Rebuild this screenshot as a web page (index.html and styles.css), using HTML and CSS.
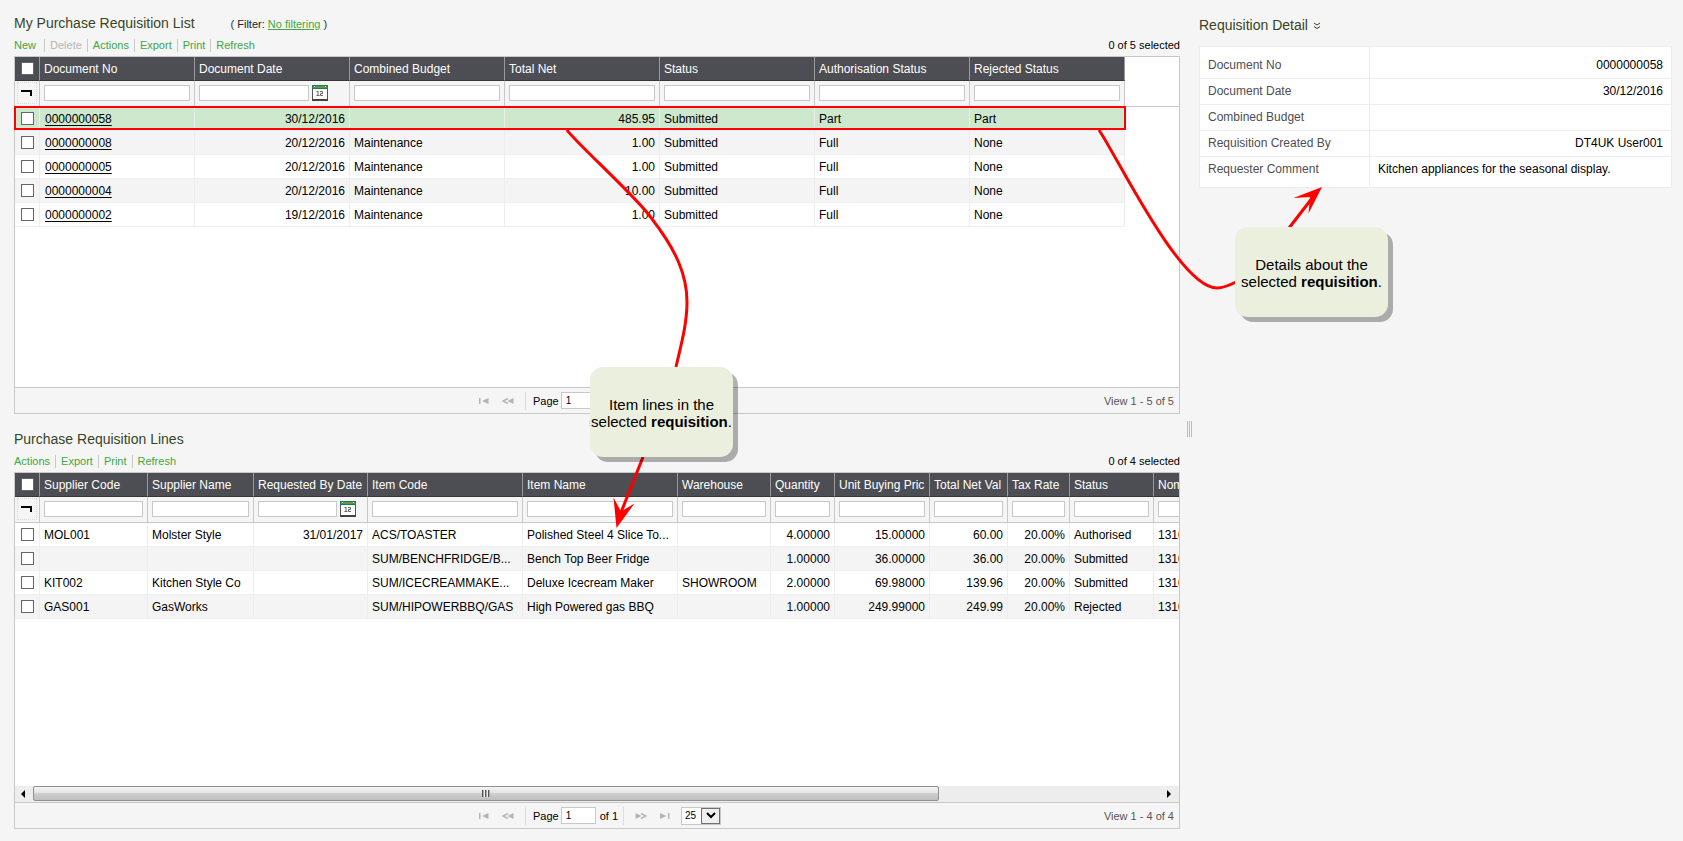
FILE: index.html
```html
<!DOCTYPE html>
<html lang="en">
<head>
<meta charset="utf-8">
<title>My Purchase Requisition List</title>
<link rel="stylesheet" href="styles.css">
</head>
<body>
<svg class="defs" aria-hidden="true">
  <defs>
    <symbol id="i-cal" viewBox="0 0 16 16"><path fill="#fff" stroke="#555" d="M.5 3.500v11.500h15V3.500z"/><path fill="#444" d="M0 14h16v2H0z"/><path fill="#13805f" d="M0 0h16v4H0z"/><path fill="#6f9440" d="M1 1h14v2H1z"/><path fill="#fff" d="M2 1h1v1H2zM13 1h1v1h-1z"/><path fill="none" stroke="#666" d="M4.500 6.500h1.500M6 6v5M4.500 10.500h3M8 6.500h2.500v2h-2v2H11"/></symbol>
    <symbol id="i-reset" viewBox="0 0 12 8"><path fill="none" stroke="#000" stroke-width="2" d="M0 2h10v5"/></symbol>
    <symbol id="i-first" viewBox="0 0 10 6"><path fill="#b4b4b4" d="M0 0h1.500v6H0zM9.500 0v6L3 3z"/></symbol>
    <symbol id="i-prev" viewBox="0 0 12 6"><path fill="#b4b4b4" d="M11.500 0v6L5.500 3z"/><path fill="none" stroke="#b4b4b4" stroke-width="1.500" d="M6 .5 1 3l5 2.500"/></symbol>
    <symbol id="i-next" viewBox="0 0 12 6"><path fill="#b4b4b4" d="M.5 0v6l6-3z"/><path fill="none" stroke="#b4b4b4" stroke-width="1.500" d="M6 .5 11 3 6 5.500"/></symbol>
    <symbol id="i-last" viewBox="0 0 10 6"><path fill="#b4b4b4" d="M8 0h1.500v6H8zM0 0v6l6.500-3z"/></symbol>
  </defs>
</svg>
<div class="page">
  <main class="lists">
    <section class="panel">
      <div class="title-row">
        <h1>My Purchase Requisition List</h1>
        <p class="filter">( <span>Filter:</span> <a href="#filter">No filtering</a> )</p>
      </div>
      <div class="toolbar">
        <button class="wide">New</button><button disabled>Delete</button><button>Actions</button><button>Export</button><button>Print</button><button>Refresh</button>
        <span class="count">0 of 5 selected</span>
      </div>
      <div class="grid">
        <div class="grid-body">
          <table class="req">
            <colgroup><col class="c-check"><col class="c155"><col class="c155"><col class="c155"><col class="c155"><col class="c155"><col class="c155"><col class="c155"><col></colgroup>
            <thead>
              <tr class="head"><th><input type="checkbox" aria-label="Select all requisitions"></th><th>Document No</th><th>Document Date</th><th>Combined Budget</th><th>Total Net</th><th>Status</th><th>Authorisation Status</th><th>Rejected Status</th><td class="fill"></td></tr>
              <tr class="find"><td><button class="reset" aria-label="Clear filters"><svg><use href="#i-reset"/></svg></button></td><td><input type="text" aria-label="Filter Document No"></td><td><div class="date"><input type="text" aria-label="Filter Document Date"><button aria-label="Pick date"><svg><use href="#i-cal"/></svg></button></div></td><td><input type="text" aria-label="Filter Combined Budget"></td><td><input type="text" aria-label="Filter Total Net"></td><td><input type="text" aria-label="Filter Status"></td><td><input type="text" aria-label="Filter Authorisation Status"></td><td><input type="text" aria-label="Filter Rejected Status"></td><td class="fill"></td></tr>
            </thead>
            <tbody>
              <tr class="selected"><td><input type="checkbox" aria-label="Select 0000000058"></td><td><a href="#58">0000000058</a></td><td class="num">30/12/2016</td><td></td><td class="num">485.95</td><td>Submitted</td><td>Part</td><td>Part</td><td class="fill"></td></tr>
              <tr><td><input type="checkbox" aria-label="Select 0000000008"></td><td><a href="#8">0000000008</a></td><td class="num">20/12/2016</td><td>Maintenance</td><td class="num">1.00</td><td>Submitted</td><td>Full</td><td>None</td><td class="fill"></td></tr>
              <tr><td><input type="checkbox" aria-label="Select 0000000005"></td><td><a href="#5">0000000005</a></td><td class="num">20/12/2016</td><td>Maintenance</td><td class="num">1.00</td><td>Submitted</td><td>Full</td><td>None</td><td class="fill"></td></tr>
              <tr><td><input type="checkbox" aria-label="Select 0000000004"></td><td><a href="#4">0000000004</a></td><td class="num">20/12/2016</td><td>Maintenance</td><td class="num">10.00</td><td>Submitted</td><td>Full</td><td>None</td><td class="fill"></td></tr>
              <tr><td><input type="checkbox" aria-label="Select 0000000002"></td><td><a href="#2">0000000002</a></td><td class="num">19/12/2016</td><td>Maintenance</td><td class="num">1.00</td><td>Submitted</td><td>Full</td><td>None</td><td class="fill"></td></tr>
            </tbody>
          </table>
        </div>
        <div class="pager">
          <div class="pager-nav">
            <button aria-label="First page"><svg class="w10"><use href="#i-first"/></svg></button><button aria-label="Previous page"><svg class="w12"><use href="#i-prev"/></svg></button>
            <span class="sep"></span>
            <label for="p1">Page</label><input id="p1" type="text" value="1">
          </div>
          <span class="view">View 1 - 5 of 5</span>
        </div>
      </div>
    </section>
    <div class="hsplit"><i></i></div>
    <section class="panel lines">
      <div class="title-row">
        <h2>Purchase Requisition Lines</h2>
      </div>
      <div class="toolbar">
        <button>Actions</button><button>Export</button><button>Print</button><button>Refresh</button>
        <span class="count">0 of 4 selected</span>
      </div>
      <div class="grid">
        <div class="grid-body">
          <table class="items">
            <colgroup><col class="c-check"><col class="c108"><col class="c106"><col class="c114"><col class="c155"><col class="c155"><col class="c93"><col class="c64"><col class="c95"><col class="c78"><col class="c62"><col class="c84"><col class="c155"></colgroup>
            <thead>
              <tr class="head"><th><input type="checkbox" aria-label="Select all lines"></th><th>Supplier Code</th><th>Supplier Name</th><th>Requested By Date</th><th>Item Code</th><th>Item Name</th><th>Warehouse</th><th>Quantity</th><th>Unit Buying Pric</th><th>Total Net Val</th><th>Tax Rate</th><th>Status</th><th>Nominal</th></tr>
              <tr class="find"><td><button class="reset" aria-label="Clear filters"><svg><use href="#i-reset"/></svg></button></td><td><input type="text" aria-label="Filter Supplier Code"></td><td><input type="text" aria-label="Filter Supplier Name"></td><td><div class="date"><input type="text" aria-label="Filter Requested By Date"><button aria-label="Pick date"><svg><use href="#i-cal"/></svg></button></div></td><td><input type="text" aria-label="Filter Item Code"></td><td><input type="text" aria-label="Filter Item Name"></td><td><input type="text" aria-label="Filter Warehouse"></td><td><input type="text" aria-label="Filter Quantity"></td><td><input type="text" aria-label="Filter Unit Buying Price"></td><td><input type="text" aria-label="Filter Total Net Value"></td><td><input type="text" aria-label="Filter Tax Rate"></td><td><input type="text" aria-label="Filter Status"></td><td><input type="text" aria-label="Filter Nominal"></td></tr>
            </thead>
            <tbody>
              <tr><td><input type="checkbox" aria-label="Select line 1"></td><td>MOL001</td><td>Molster Style</td><td class="num">31/01/2017</td><td>ACS/TOASTER</td><td>Polished Steel 4 Slice To...</td><td></td><td class="num">4.00000</td><td class="num">15.00000</td><td class="num">60.00</td><td class="num">20.00%</td><td>Authorised</td><td>1310</td></tr>
              <tr><td><input type="checkbox" aria-label="Select line 2"></td><td></td><td></td><td></td><td>SUM/BENCHFRIDGE/B...</td><td>Bench Top Beer Fridge</td><td></td><td class="num">1.00000</td><td class="num">36.00000</td><td class="num">36.00</td><td class="num">20.00%</td><td>Submitted</td><td>1310</td></tr>
              <tr><td><input type="checkbox" aria-label="Select line 3"></td><td>KIT002</td><td>Kitchen Style Co</td><td></td><td>SUM/ICECREAMMAKE...</td><td>Deluxe Icecream Maker</td><td>SHOWROOM</td><td class="num">2.00000</td><td class="num">69.98000</td><td class="num">139.96</td><td class="num">20.00%</td><td>Submitted</td><td>1310</td></tr>
              <tr><td><input type="checkbox" aria-label="Select line 4"></td><td>GAS001</td><td>GasWorks</td><td></td><td>SUM/HIPOWERBBQ/GAS</td><td>High Powered gas BBQ</td><td></td><td class="num">1.00000</td><td class="num">249.99000</td><td class="num">249.99</td><td class="num">20.00%</td><td>Rejected</td><td>1310</td></tr>
            </tbody>
          </table>
        </div>
        <div class="scroll">
          <button aria-label="Scroll left"><svg viewBox="0 0 6 8"><path d="M5 0v8L1 4z"/></svg></button>
          <div class="track"><div class="thumb"><i></i></div></div>
          <button aria-label="Scroll right"><svg viewBox="0 0 6 8"><path d="M1 0v8l4-4z"/></svg></button>
        </div>
        <div class="pager">
          <div class="pager-nav">
            <button aria-label="First page"><svg class="w10"><use href="#i-first"/></svg></button><button aria-label="Previous page"><svg class="w12"><use href="#i-prev"/></svg></button>
            <span class="sep"></span>
            <label for="p2">Page</label><input id="p2" type="text" value="1"><span class="total">of 1</span>
            <span class="sep"></span>
            <button aria-label="Next page"><svg class="w12"><use href="#i-next"/></svg></button><button aria-label="Last page"><svg class="w10"><use href="#i-last"/></svg></button>
            <span class="size"><select aria-label="Rows per page"><option>25</option></select><span class="drop"><svg viewBox="0 0 10 7"><path d="M1 1l4 4 4-4"/></svg></span></span>
          </div>
          <span class="view">View 1 - 4 of 4</span>
        </div>
      </div>
    </section>
  </main>
  <div class="vsplit"><i></i></div>
  <aside class="detail">
    <h2>Requisition Detail <svg class="chev" viewBox="0 0 8 8"><path d="M1 1l3 2 3-2M1 4.500l3 2 3-2"/></svg></h2>
    <table>
      <tr><th>Document No</th><td class="num">0000000058</td></tr>
      <tr><th>Document Date</th><td class="num">30/12/2016</td></tr>
      <tr><th>Combined Budget</th><td></td></tr>
      <tr><th>Requisition Created By</th><td class="num">DT4UK User001</td></tr>
      <tr><th>Requester Comment</th><td>Kitchen appliances for the seasonal display.</td></tr>
    </table>
  </aside>
  <svg class="notes" aria-hidden="true">
    <rect class="line thin" x="15" y="107" width="1110" height="22"/>
    <path class="line" d="M567 130C575 142 640 200 652 219C676 250 687 275 687 302C687 324 681 345 676 367M643 457L620 515M1099 130C1118 158 1180 288 1217 288C1224 288 1230 285 1236 282M1289 228L1313 197"/>
    <path class="tip" d="M616.500 528l-3-30.500 7.500 14 13.500-8zM1322 187l-28.500 11 16.500-1-1.500 16.500z"/>
  </svg>
  <div class="callout callout-lines">Item lines in the<br>selected <b>requisition</b>.</div>
  <div class="callout callout-detail">Details about the<br>selected <b>requisition</b>.</div>
</div>
</body>
</html>
```

FILE: styles.css
```css
* { box-sizing: border-box; }
body { margin: 0; background: #f5f5f5; color: #000; font: 12px/16px "Liberation Sans", Arial, sans-serif; }
button, input, select { margin: 0; padding: 0; border: 0; background: none; font: inherit; color: inherit; border-radius: 0; }
h1, h2, p { margin: 0; font-weight: 400; }
.defs { position: absolute; width: 0; height: 0; }

.page { position: relative; display: grid; grid-template-columns: minmax(0, 1166fr) 19px minmax(0, 473fr); min-height: 100vh; padding: 0 11px 12px 14px; }
.lists { display: flex; flex-direction: column; padding-top: 14px; }
.panel { display: flex; flex-direction: column; flex: 1 1 1px; }
.panel.lines { flex-basis: 0; }
.title-row { display: flex; align-items: baseline; height: 18px; margin-bottom: 2px; }
h1, h2 { font-size: 14px; line-height: 18px; color: #36451f; }
.filter { margin-left: 36px; font-size: 11px; line-height: 20px; color: #333; }
.filter a { color: #42a63e; }
.filter span { color: #222; }

.toolbar { display: flex; align-items: center; height: 22px; font-size: 11px; line-height: 13px; }
.toolbar button { color: #42a63e; padding-right: 5px; }
.toolbar button + button { padding-left: 5px; border-left: 1px solid #c8c8c8; }
.toolbar .wide { padding-right: 8px; }
.toolbar button:disabled { color: #b5b5b5; }
.count { margin-left: auto; }

.grid { display: flex; flex-direction: column; flex: 1; border: 1px solid #c8c8c8; background: #fff; }
.grid-body { flex: 1; overflow: hidden; }
.grid table { table-layout: fixed; border-collapse: separate; border-spacing: 0; }
.req { width: 100%; }
.items { width: 1294px; }
.c-check { width: 25px; }
.c155 { width: 155px; }
.c108 { width: 108px; }
.c106 { width: 106px; }
.c114 { width: 114px; }
.c93 { width: 93px; }
.c64 { width: 64px; }
.c95 { width: 95px; }
.c78 { width: 78px; }
.c62 { width: 62px; }
.c84 { width: 84px; }
.grid th, .grid td { height: 24px; padding: 0 4px; text-align: left; font-weight: 400; white-space: nowrap; overflow: hidden; border-right: 1px solid #ededed; border-bottom: 1px solid #f0f0f0; }
.grid .num { text-align: right; }
.grid .head th { background: #4d4e53; color: #fff; border-right-color: #9a9a9a; border-bottom-color: #37353a; }
.grid .find td { height: 26px; padding-bottom: 2px; background: #f5f5f5; border-color: #c8c8c8; }
.grid tbody tr:nth-child(even) td { background: #f4f4f4; }
.grid tbody .selected td { background: #cde8cc; }
.grid .head .fill, .grid .find .fill, .grid tbody tr td.fill.fill { background: #fff; border-right: 0; }
.grid .head .fill, .grid tbody tr .fill { border-bottom: 0; }
.grid td a { color: #000; padding-left: 1px; text-underline-offset: 2px; }
.grid th:first-child, .grid td:first-child { padding: 0; text-align: center; }
input[type=checkbox] { appearance: none; display: block; width: 13px; height: 13px; margin: 0 auto 0 6px; border: 1px solid #666; background: #fff; }
.find input { display: block; width: 100%; height: 16px; border: 1px solid #c8c8c8; background: #fff; }
.date { display: flex; gap: 3px; }
.date input { width: 75%; }
.date button { flex: none; width: 16px; height: 16px; }
.date svg { display: block; width: 16px; height: 16px; }
.reset { display: flex; align-items: center; justify-content: center; width: 20px; height: 22px; margin: 0 auto 1px 2px; border: 1px dotted #d8d8d8; }
.reset svg { width: 12px; height: 8px; }

.pager { display: grid; grid-template-columns: 1fr 250px 1fr; align-items: center; height: 26px; border-top: 1px solid #c8c8c8; background: #f5f5f5; font-size: 11px; }
.pager-nav { grid-column: 2; display: flex; align-items: center; white-space: nowrap; }
.pager-nav > * { flex: none; }
.pager button { display: flex; align-items: center; justify-content: center; width: 24px; height: 18px; }
.pager svg { height: 6px; }
.w10 { width: 10px; }
.w12 { width: 12px; }
.sep { width: 1px; height: 18px; margin: 0 5px; background: #ddd; }
.pager label { margin: 0 2px; }
.pager input { width: 35px; height: 17px; padding-left: 4px; border: 1px solid #c8c8c8; background: #fff; font-size: 10px; }
.total { margin-left: 4px; }
.view { padding-right: 5px; text-align: right; color: #555; }
.size { position: relative; display: block; margin-left: 4px; }
.size select { display: block; appearance: none; width: 40px; height: 18px; padding-left: 3px; border: 1px solid #c8c8c8; background: #fff; font-size: 10px; }
.drop { position: absolute; top: 1px; right: 1px; display: flex; align-items: center; justify-content: center; width: 19px; height: 16px; border: 1px solid #707070; background: #f0f0f0; pointer-events: none; }
.drop path { fill: none; stroke: #000; stroke-width: 2; }
.drop svg { width: 10px; height: 7px; }

.scroll { display: flex; height: 16px; background: #ededed; }
.scroll button { display: flex; align-items: center; justify-content: center; width: 18px; padding-right: 3px; }
.scroll svg { width: 6px; height: 8px; }
.track { flex: 1; display: flex; }
.thumb { display: flex; align-items: center; justify-content: center; width: 80.3%; height: 15px; border: 1px solid #929292; border-radius: 2px; background: linear-gradient(#f3f3f3, #e4e4e4 45%, #cfcfd0 50%, #bfbfc1); }
.thumb i { width: 8px; height: 7px; background: repeating-linear-gradient(90deg, #555 0 1px, #aaa 1px 2px, #eee 2px 3px); }

.hsplit { height: 16px; padding-top: 7px; }
.hsplit i { display: block; width: 16px; height: 5px; margin: 0 auto; background: repeating-linear-gradient(#c4c4bc 0 1px, transparent 1px 2px); }
.vsplit { display: flex; align-items: flex-start; justify-content: center; padding-top: 421px; }
.vsplit i { width: 5px; height: 16px; margin-right: 1px; background: repeating-linear-gradient(90deg, #bdbdb4 0 1px, transparent 1px 2px); }

.detail { padding-top: 16px; }
.detail h2 { margin-bottom: 12px; }
.chev { width: 8px; height: 8px; margin-left: 1px; }
.chev path { fill: none; stroke: #36451f; stroke-width: 1; }
.detail table { width: 100%; table-layout: fixed; border-collapse: collapse; background: #fff; }
.detail th, .detail td { height: 26px; padding: 0 8px; border: 1px solid #ededed; text-align: left; font-weight: 400; }
.detail th { width: 36%; color: #4d4e53; }
.detail td.num { text-align: right; }
.detail tr:first-child > * { height: 32px; padding-top: 4px; }
.detail tr:nth-child(n+2) > * { padding-bottom: 1px; }
.detail tr:last-child > * { height: 31px; padding-bottom: 6px; }

.notes { position: absolute; top: 0; left: 0; width: 1400px; height: 540px; pointer-events: none; }
.line { fill: none; stroke: #f00; stroke-width: 3; }
.thin { stroke-width: 2; }
.tip { fill: #f00; }
.callout { position: absolute; height: 90px; padding-top: 29px; border-radius: 13px; background: #ebefde; box-shadow: 5px 5px 0 rgba(0, 0, 0, .3); font-size: 15px; line-height: 17px; text-align: center; white-space: nowrap; }
.callout-lines { top: 367px; left: 590px; width: 143px; }
.callout-detail { top: 227px; left: 1235px; width: 153px; }
```
